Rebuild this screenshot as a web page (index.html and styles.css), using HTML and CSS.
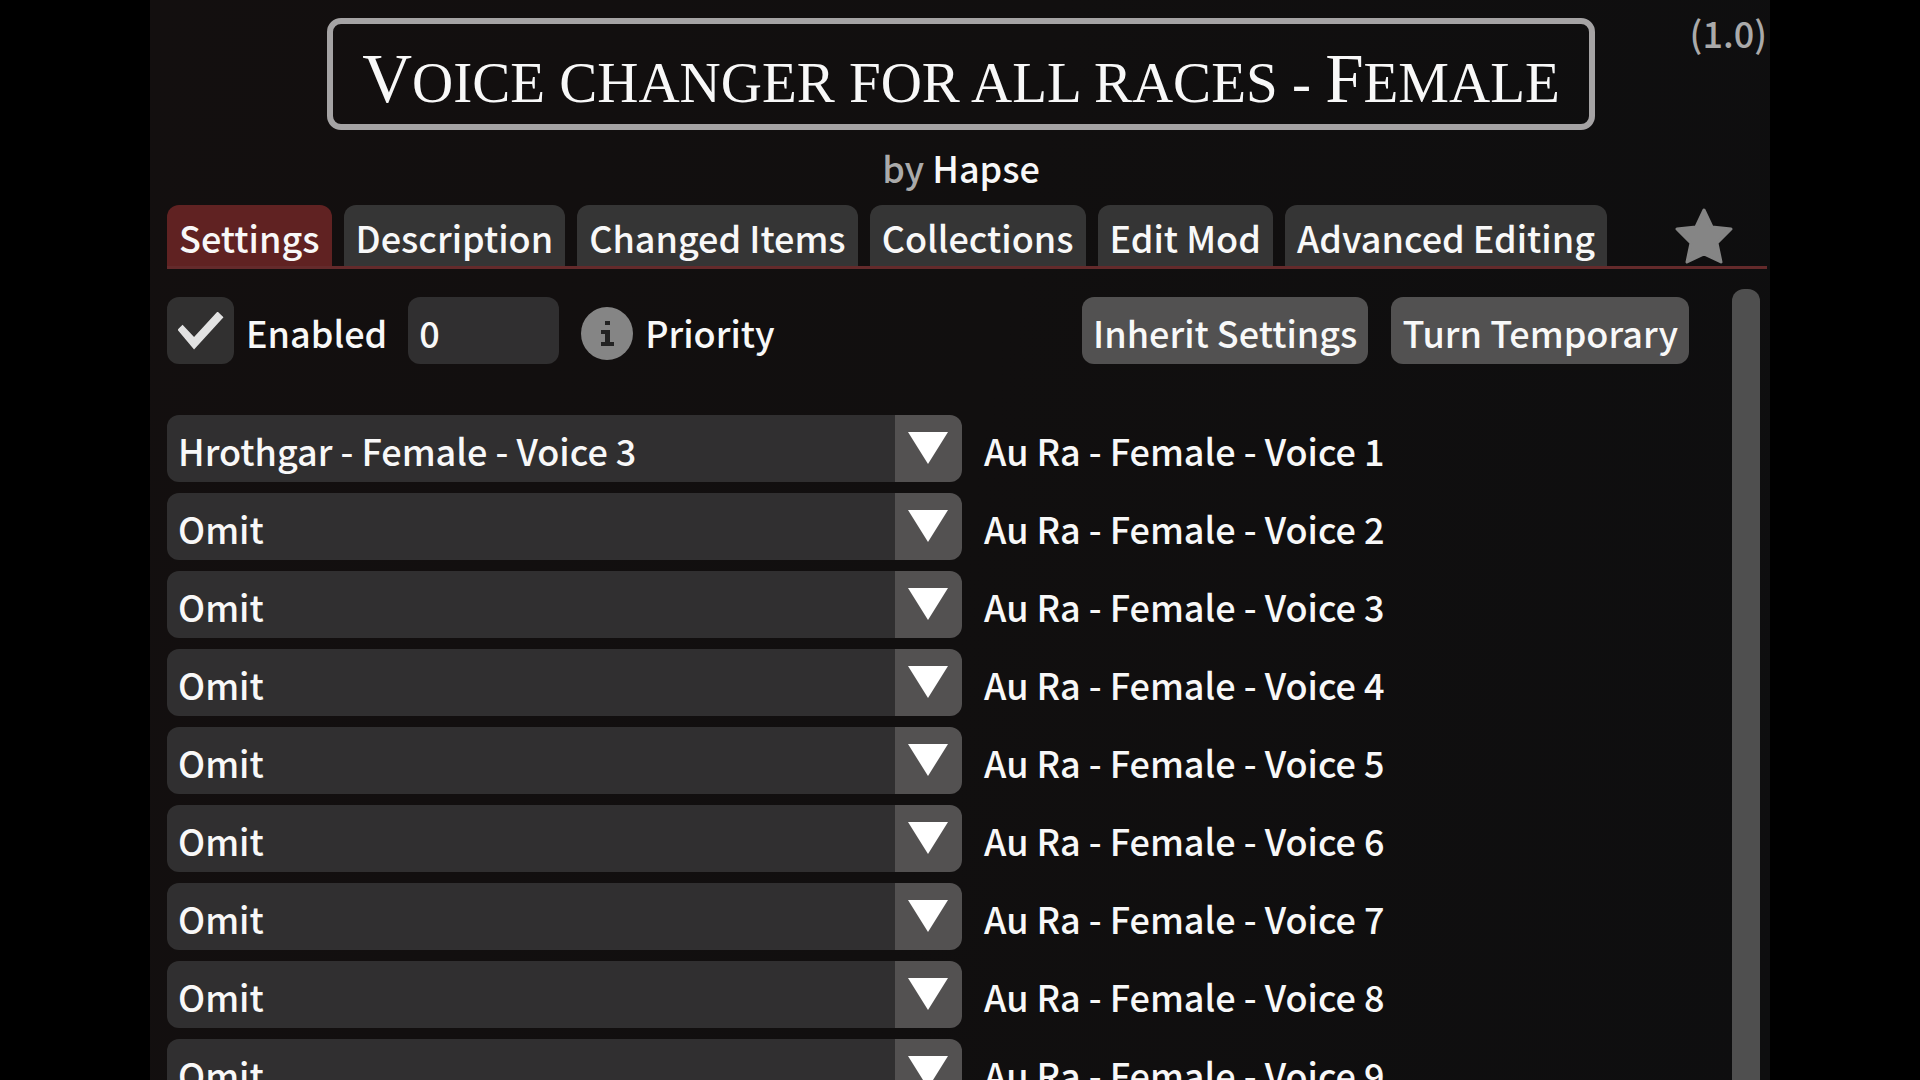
FILE: index.html
```html
<!DOCTYPE html>
<html lang="en">
<head>
<meta charset="utf-8">
<title>Voice changer for all races - Female</title>
<link rel="stylesheet" href="styles.css">
</head>
<body>
<main class="panel">
  <header class="header">
    <h1 class="title"><span class="cap">V</span>oice changer for all races - <span class="cap">F</span>emale</h1>
    <span class="version">(1.0)</span>
  </header>
  <p class="author"><span class="muted">by</span> Hapse</p>

  <nav class="tabs">
    <button class="tab active" type="button">Settings</button>
    <button class="tab" type="button">Description</button>
    <button class="tab" type="button">Changed Items</button>
    <button class="tab" type="button">Collections</button>
    <button class="tab" type="button">Edit Mod</button>
    <button class="tab" type="button">Advanced Editing</button>
    <button class="favorite" type="button" aria-label="Favorite">
      <svg viewBox="0 0 58 56" width="58" height="56"><path d="M29 2 L37 19 L56 21 L42 35 L46 54 L29 46 L12 54 L16 35 L2 21 L21 19Z" fill="#858585" stroke="#858585" stroke-width="3" stroke-linejoin="round"/></svg>
    </button>
  </nav>

  <div class="body">
    <div class="content">
      <div class="toolbar">
        <input class="check" type="checkbox" id="enabled" checked>
        <label class="check-label" for="enabled">Enabled</label>
        <input class="number" type="text" id="priority" value="0">
        <svg class="info" viewBox="0 0 52 53" width="52" height="53" aria-hidden="true"><ellipse cx="26" cy="26.500" rx="26" ry="26.500" fill="#858585"/><path d="M24 14h5v4h-5zM20 23h9v12h4v4H20v-4h4v-8h-4z" fill="#222"/></svg>
        <label for="priority">Priority</label>
        <div class="actions">
          <button class="button" type="button">Inherit Settings</button>
          <button class="button" type="button">Turn Temporary</button>
        </div>
      </div>

      <div class="options">
        <div class="row"><div class="combo"><select id="v1"><option>Hrothgar - Female - Voice 3</option><option>Omit</option></select><svg class="arrow" viewBox="0 0 40 32"><path d="M0 0H40L20 32Z"/></svg></div><label for="v1">Au Ra - Female - Voice 1</label></div>
        <div class="row"><div class="combo"><select id="v2"><option>Omit</option></select><svg class="arrow" viewBox="0 0 40 32"><path d="M0 0H40L20 32Z"/></svg></div><label for="v2">Au Ra - Female - Voice 2</label></div>
        <div class="row"><div class="combo"><select id="v3"><option>Omit</option></select><svg class="arrow" viewBox="0 0 40 32"><path d="M0 0H40L20 32Z"/></svg></div><label for="v3">Au Ra - Female - Voice 3</label></div>
        <div class="row"><div class="combo"><select id="v4"><option>Omit</option></select><svg class="arrow" viewBox="0 0 40 32"><path d="M0 0H40L20 32Z"/></svg></div><label for="v4">Au Ra - Female - Voice 4</label></div>
        <div class="row"><div class="combo"><select id="v5"><option>Omit</option></select><svg class="arrow" viewBox="0 0 40 32"><path d="M0 0H40L20 32Z"/></svg></div><label for="v5">Au Ra - Female - Voice 5</label></div>
        <div class="row"><div class="combo"><select id="v6"><option>Omit</option></select><svg class="arrow" viewBox="0 0 40 32"><path d="M0 0H40L20 32Z"/></svg></div><label for="v6">Au Ra - Female - Voice 6</label></div>
        <div class="row"><div class="combo"><select id="v7"><option>Omit</option></select><svg class="arrow" viewBox="0 0 40 32"><path d="M0 0H40L20 32Z"/></svg></div><label for="v7">Au Ra - Female - Voice 7</label></div>
        <div class="row"><div class="combo"><select id="v8"><option>Omit</option></select><svg class="arrow" viewBox="0 0 40 32"><path d="M0 0H40L20 32Z"/></svg></div><label for="v8">Au Ra - Female - Voice 8</label></div>
        <div class="row"><div class="combo"><select id="v9"><option>Omit</option></select><svg class="arrow" viewBox="0 0 40 32"><path d="M0 0H40L20 32Z"/></svg></div><label for="v9">Au Ra - Female - Voice 9</label></div>
      </div>
    </div>
    <div class="scrollbar"></div>
  </div>
</main>
</body>
</html>
```
FILE: styles.css
```css
* {
  box-sizing: border-box;
}

body {
  margin: 0;
  height: 100vh;
  overflow: hidden;
  background: #000;
  color: #f8f8f8;
  font: 500 36px/40px "Noto Sans CJK JP", "Noto Sans", sans-serif;
  font-kerning: normal;
}

button,
input,
select {
  font: inherit;
  font-kerning: inherit;
  color: inherit;
  border: 0;
  margin: 0;
}

.panel {
  display: flex;
  flex-direction: column;
  height: 100vh;
  margin: 0 150px;
  padding: 18px 3px 0 17px;
  overflow: hidden;
  background: linear-gradient(100deg, #130f0f, #110f0f 50%, #0e0e0f);
}

.header {
  display: grid;
  grid-template-columns: 1fr auto 1fr;
  align-items: start;
  margin-left: -12px;
}

.title {
  grid-column: 2;
  margin: 0;
  padding: 18px 29px 0;
  border: 6px solid #a5a3a4;
  border-radius: 14px;
  font: 400 57px/82px "Liberation Serif", serif;
  text-transform: uppercase;
  white-space: nowrap;
}

.cap {
  font-size: 69px;
  line-height: 64px;
}

.version {
  justify-self: end;
  color: #aaa;
  line-height: 28px;
}

.author {
  margin: 17px 0 18px -12px;
  text-align: center;
}

.muted {
  color: #aaa;
}

.tabs {
  display: flex;
  gap: 12px;
  border-bottom: 3px solid #642a2b;
}

.tab {
  height: 61px;
  padding: 2px 12px 0;
  border-radius: 12px 12px 0 0;
  background: #353535;
  white-space: nowrap;
}

.tab.active {
  background: #602222;
}

.favorite {
  display: flex;
  align-items: center;
  margin-left: auto;
  padding: 0 34px 0 0;
  background: none;
}

.body {
  display: flex;
  flex: 1;
  min-height: 0;
  gap: 43px;
  padding: 20px 7px 0 0;
}

.content {
  flex: 1;
  min-width: 0;
  padding-top: 8px;
}

.scrollbar {
  width: 28px;
  border-radius: 12px 12px 0 0;
  background: #4f4f4f;
}

.toolbar {
  display: flex;
  align-items: center;
  gap: 12px;
  margin-bottom: 51px;
}

label {
  padding-top: 2px;
}

.check {
  appearance: none;
  display: grid;
  place-items: center;
  width: 67px;
  height: 67px;
  border-radius: 12px;
  background: #313030;
}

.check:checked::before {
  content: "";
  width: 46px;
  height: 38px;
  background: #e2e2e2;
  clip-path: polygon(0 48%, 11% 35%, 36% 67%, 87% 0, 100% 15%, 36% 100%);
}

.check-label {
  margin-right: 9px;
}

.number {
  width: 151px;
  height: 67px;
  padding: 2px 11px 0;
  border-radius: 12px;
  background: #302f30;
}

.info {
  margin: 6px 0 0 10px;
}

.actions {
  display: flex;
  gap: 23px;
  margin-left: auto;
}

.button {
  height: 67px;
  padding: 2px 11px 0;
  border-radius: 12px;
  background: #525151;
  white-space: nowrap;
}

.options {
  display: grid;
  gap: 11px;
}

.row {
  display: grid;
  grid-template-columns: 795fr 705fr;
  gap: 22px;
  align-items: center;
}

.combo {
  position: relative;
}

.combo select {
  appearance: none;
  display: block;
  width: 100%;
  height: 67px;
  padding: 2px 78px 0 11px;
  border-radius: 12px;
  background: linear-gradient(#535151, #535151) right / 67px 100% no-repeat #302f30;
  line-height: 60px;
}

.arrow {
  position: absolute;
  top: 17px;
  right: 14px;
  width: 40px;
  height: 32px;
  fill: #fff;
  pointer-events: none;
}
```
